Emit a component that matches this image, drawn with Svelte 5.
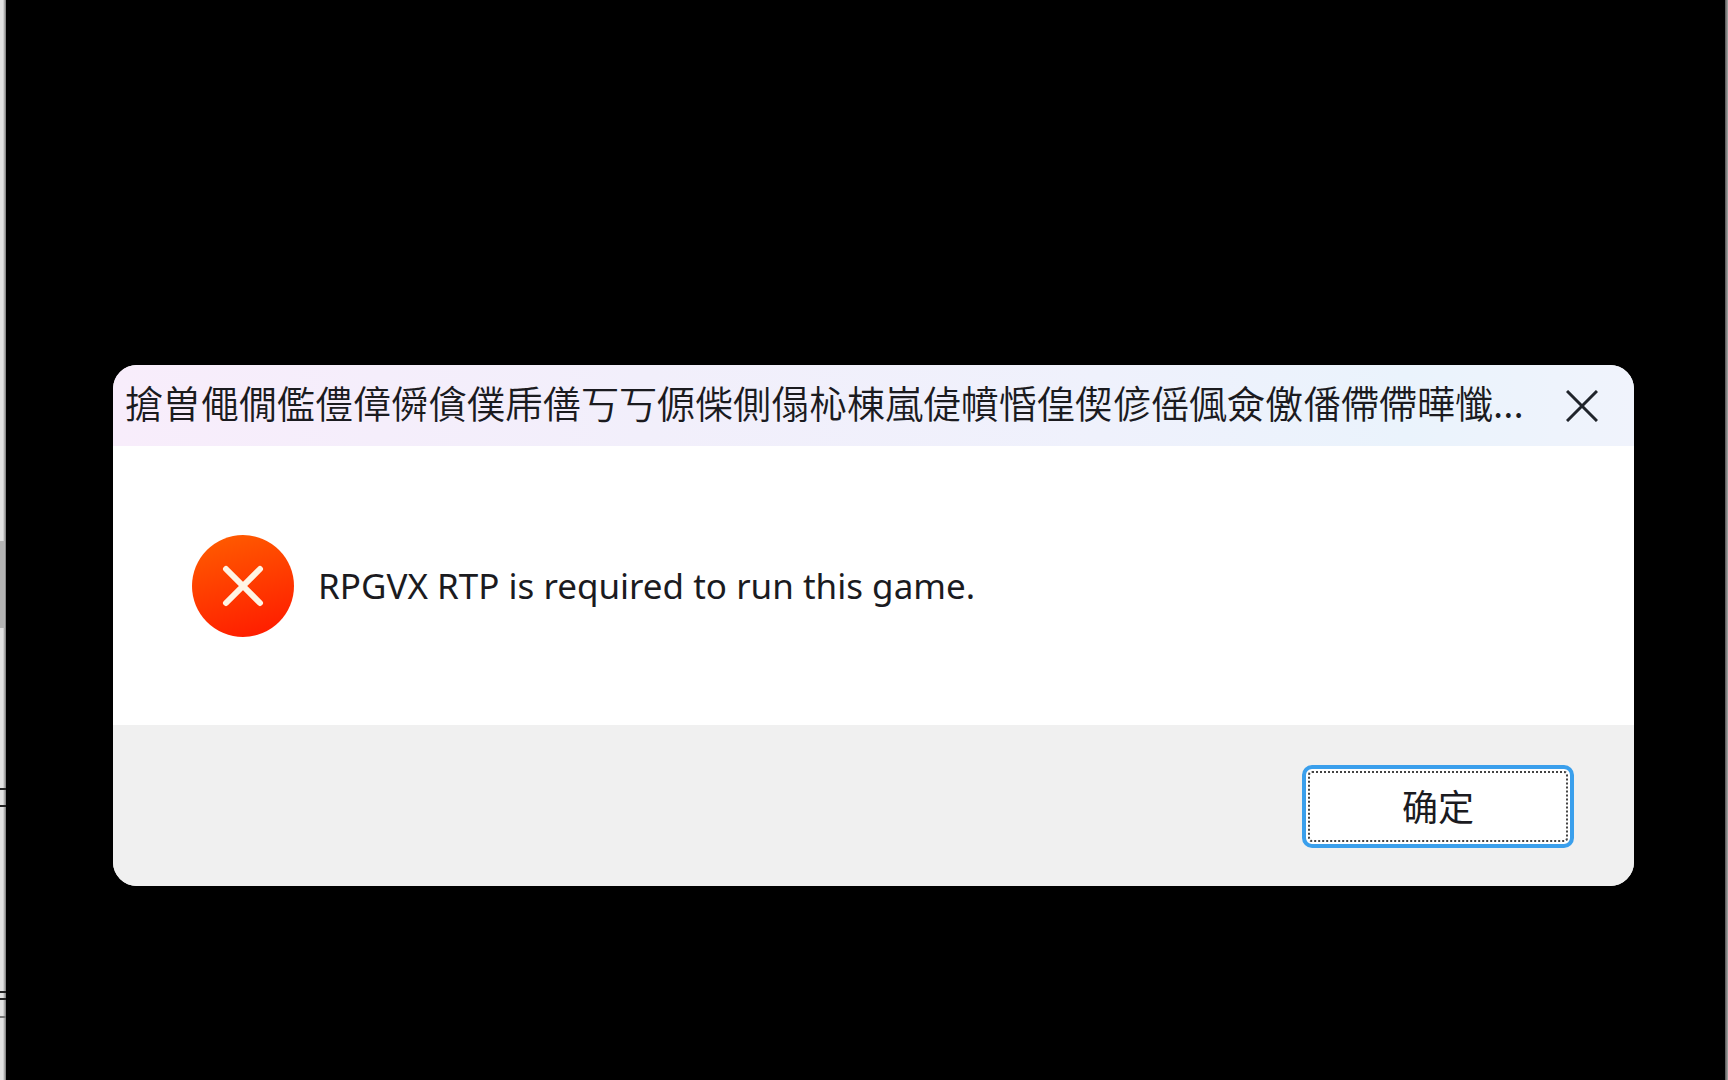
<script>
  const title = '搶曽僶僩儖僼傽僢僋僕乕僐丂丂傆偨側傝杺棟嵐偼幩惛偟偰偐傜偑僉儌僠僀僀曄懺...';
  let open = $state(true);
</script>

<main class="desktop">
  <div class="edge left" aria-hidden="true">
    <svg width="6" height="1080" viewBox="0 0 6 1080">
      <rect y="541" width="5" height="87" fill="#b4b4b4" />
      <path d="M0 789h6M0 806h6M0 992h6M0 999h6" stroke="#222" stroke-width="2" />
      <path d="M0 1017h6" stroke="#777" stroke-width="2" />
    </svg>
  </div>
  <div class="screen">
    {#if open}
      <div class="dialog" role="alertdialog" aria-labelledby="title" aria-describedby="message">
        <header>
          <h1 id="title">{title}</h1>
          <button class="close" aria-label="关闭" onclick={() => (open = false)}>
            <svg width="32" height="32" viewBox="0 0 32 32">
              <path d="M1 1L31 31M31 1L1 31" stroke="#20242b" stroke-width="3" fill="none" />
            </svg>
          </button>
        </header>
        <section>
          <svg class="icon" width="102" height="102" viewBox="0 0 102 102" aria-hidden="true">
            <defs>
              <linearGradient id="red" x1="0.3" y1="0" x2="0.6" y2="1">
                <stop offset="0" stop-color="#ff5a00" />
                <stop offset="1" stop-color="#ff1e00" />
              </linearGradient>
            </defs>
            <circle cx="51" cy="51" r="51" fill="url(#red)" />
            <path d="M34 34L68 68M68 34L34 68" stroke="#fff4e4" stroke-width="6" stroke-linecap="round" />
          </svg>
          <p id="message">RPGVX RTP is required to run this game.</p>
        </section>
        <footer>
          <button class="ok" onclick={() => (open = false)}><span>确定</span></button>
        </footer>
      </div>
    {/if}
  </div>
  <div class="edge right" aria-hidden="true"></div>
</main>

<style>
  :global(body) {
    margin: 0;
    background: #000;
  }
  .desktop {
    display: flex;
    min-height: 100vh;
    background: #000;
    color: #1b1b1f;
    font-family: 'Noto Sans', 'Noto Sans CJK SC', sans-serif;
  }
  .edge {
    flex: none;
    overflow: hidden;
  }
  .edge svg {
    display: block;
  }
  .left {
    width: 6px;
    background: linear-gradient(90deg, #e2e2e2 50%, #777);
  }
  .right {
    width: 3px;
    background: linear-gradient(90deg, #555, #aaa);
  }
  .screen {
    flex: 1;
    min-width: 0;
    padding: 365px 91px 0 107px;
  }
  .dialog {
    overflow: hidden;
    border-radius: 24px;
    background: #fff;
  }
  header {
    display: flex;
    align-items: center;
    justify-content: space-between;
    height: 81px;
    padding: 0 36px 0 12px;
    background: linear-gradient(90deg, #f8edfb, #f2effb 35%, #eff1fc 65%, #eaf3fc 85%, #f0f3fc);
  }
  h1 {
    margin: 0;
    overflow: hidden;
    font-family: 'Noto Sans CJK SC', sans-serif;
    font-size: 38px;
    font-weight: 350;
    line-height: 72px;
    white-space: nowrap;
    padding-bottom: 8px;
  }
  button {
    border: 0;
    padding: 0;
    color: inherit;
    font-family: inherit;
  }
  .close {
    display: flex;
    background: none;
  }
  section {
    display: flex;
    align-items: center;
    gap: 24px;
    height: 279px;
    padding: 0 79px;
  }
  .icon {
    flex: none;
  }
  #message {
    margin: 0;
    font-size: 35px;
    line-height: 48px;
  }
  footer {
    display: flex;
    justify-content: flex-end;
    padding: 40px 60px 38px;
    background: #f0f0f0;
  }
  .ok {
    width: 272px;
    height: 83px;
    padding: 2px;
    border: 4px solid #3a9fec;
    border-radius: 10px;
    background: #fff;
  }
  .ok span {
    display: flex;
    align-items: center;
    justify-content: center;
    height: 100%;
    box-sizing: border-box;
    padding-bottom: 4px;
    border: 2px dotted #444;
    border-radius: 4px;
    font-family: 'Noto Sans CJK SC', sans-serif;
    font-size: 36px;
  }
</style>
